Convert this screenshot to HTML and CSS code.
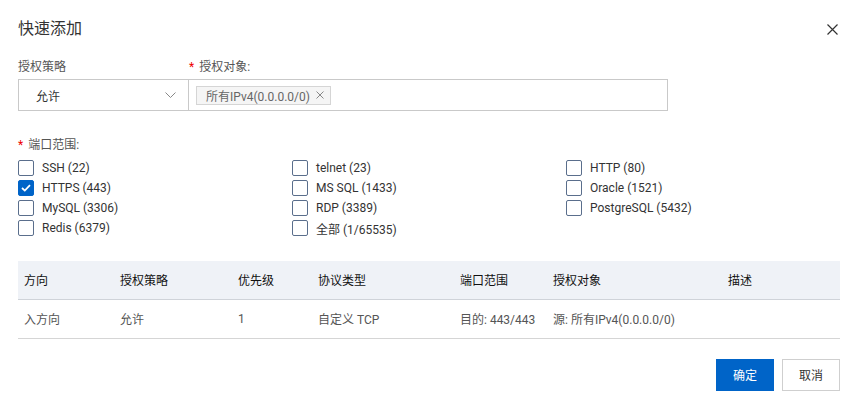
FILE: index.html
```html
<!DOCTYPE html>
<html lang="zh-CN">
<head>
<meta charset="utf-8">
<title>快速添加</title>
<link rel="stylesheet" href="styles.css">
</head>
<body>
<div class="dialog">
  <div class="dialog-header">
    <div class="title">快速添加</div>
    <svg class="close" width="11" height="11" viewBox="0 0 11 11"><path d="M0.5 0.5 L10.5 10.5 M10.5 0.5 L0.5 10.5" stroke="#333" stroke-width="1.2" fill="none"/></svg>
  </div>

  <div class="form-row">
    <div class="field field-policy">
      <div class="label">授权策略</div>
      <div class="select">
        <span>允许</span>
        <svg class="chevron" width="11" height="6" viewBox="0 0 11 6"><path d="M0.5 0.5 L5.5 5.5 L10.5 0.5" stroke="#888" stroke-width="1" fill="none"/></svg>
      </div>
    </div>
    <div class="field field-target">
      <div class="label"><span class="req">*</span>授权对象:</div>
      <div class="tag-input">
        <span class="tag">所有IPv4(0.0.0.0/0)<svg class="tag-x" width="8" height="8" viewBox="0 0 8 8"><path d="M0.5 0.5 L7.5 7.5 M7.5 0.5 L0.5 7.5" stroke="#888" stroke-width="1" fill="none"/></svg></span>
      </div>
    </div>
  </div>

  <div class="label port-label"><span class="req">*</span>端口范围:</div>
  <div class="checks">
    <label class="check"><span class="box"></span>SSH (22)</label>
    <label class="check"><span class="box"></span>telnet (23)</label>
    <label class="check"><span class="box"></span>HTTP (80)</label>
    <label class="check"><span class="box checked"><svg width="10" height="8" viewBox="0 0 10 8"><path d="M1 4 L3.8 6.6 L9 1.2" stroke="#fff" stroke-width="1.8" fill="none"/></svg></span>HTTPS (443)</label>
    <label class="check"><span class="box"></span>MS SQL (1433)</label>
    <label class="check"><span class="box"></span>Oracle (1521)</label>
    <label class="check"><span class="box"></span>MySQL (3306)</label>
    <label class="check"><span class="box"></span>RDP (3389)</label>
    <label class="check"><span class="box"></span>PostgreSQL (5432)</label>
    <label class="check"><span class="box"></span>Redis (6379)</label>
    <label class="check"><span class="box"></span>全部 (1/65535)</label>
  </div>

  <table class="rules">
    <colgroup>
      <col class="c1"><col class="c2"><col class="c3"><col class="c4"><col class="c5"><col class="c6"><col class="c7">
    </colgroup>
    <thead>
      <tr><th>方向</th><th>授权策略</th><th>优先级</th><th>协议类型</th><th>端口范围</th><th>授权对象</th><th>描述</th></tr>
    </thead>
    <tbody>
      <tr><td>入方向</td><td>允许</td><td>1</td><td>自定义 TCP</td><td>目的: 443/443</td><td>源: 所有IPv4(0.0.0.0/0)</td><td></td></tr>
    </tbody>
  </table>

  <div class="footer">
    <button class="btn btn-primary">确定</button>
    <button class="btn">取消</button>
  </div>
</div>
</body>
</html>
```
FILE: styles.css
```css
* { box-sizing: border-box; }
html, body { margin: 0; padding: 0; background: #fff; }
body {
  font-family: Roboto, "Noto Sans CJK SC", sans-serif;
  font-size: 12px;
  color: #333;
}
.dialog {
  width: 859px;
  padding: 0 19px 0 18px;
}
.dialog-header {
  display: flex;
  justify-content: space-between;
  align-items: center;
  height: 57px;
  padding-top: 1px;
}
.title {
  font-size: 16px;
  color: #333;
  line-height: 20px;
}
.close { margin-right: 2px; }

.form-row {
  display: flex;
}
.field-policy { width: 171px; }
.field-target { width: 479px; }
.label {
  height: 22px;
  line-height: 20px;
  color: #555;
  font-size: 12px;
}
.req {
  color: #e00;
  margin-right: 5px;
  font-size: 12px;
}
.select {
  height: 32px;
  border: 1px solid #c9c9c9;
  display: flex;
  align-items: center;
  justify-content: space-between;
  padding: 0 12px 0 17px;
  color: #333;
}
.tag-input {
  height: 32px;
  border: 1px solid #c9c9c9;
  border-left: none;
  display: flex;
  align-items: center;
  padding-left: 7px;
}
.tag {
  display: inline-flex;
  align-items: center;
  height: 19px;
  padding: 0 6px 0 9px;
  background: #f5f5f5;
  border: 1px solid #d5d5d5;
  color: #666;
  font-size: 12px;
}
.tag-x { margin-left: 6px; }

.port-label {
  margin-top: 24px;
  height: 23px;
}
.checks {
  display: grid;
  grid-template-columns: repeat(3, 274px);
  grid-auto-rows: 20px;
}
.check {
  display: flex;
  align-items: center;
  color: #333;
}
.box {
  width: 16px;
  height: 16px;
  border: 1px solid #5a6e8c;
  border-radius: 2px;
  margin-right: 8px;
  display: inline-flex;
  align-items: center;
  justify-content: center;
}
.box.checked {
  background: #0064c8;
  border-color: #0064c8;
}

.rules {
  width: 822px;
  margin-top: 23px;
  border-collapse: collapse;
  table-layout: fixed;
}
.c1 { width: 96px; }
.c2 { width: 118px; }
.c3 { width: 80px; }
.c4 { width: 142px; }
.c5 { width: 93px; }
.c6 { width: 175px; }
.c7 { width: 118px; }
.rules th {
  background: #eff2f7;
  height: 38px;
  text-align: left;
  font-weight: normal;
  color: #111;
  padding: 0 6px;
  border-bottom: 1px solid #cfd3d9;
}
.rules td {
  height: 39px;
  padding: 0 6px;
  color: #555;
  border-bottom: 1px solid #d5d5d5;
}
.footer {
  display: flex;
  justify-content: flex-end;
  gap: 8px;
  margin-top: 20px;
}
.btn {
  height: 32px;
  width: 58px;
  border: 1px solid #cfcfcf;
  background: #fff;
  color: #333;
  font-family: inherit;
  font-size: 12px;
  padding: 0;
}
.btn-primary {
  background: #0064c8;
  border-color: #0064c8;
  color: #fff;
}
```
